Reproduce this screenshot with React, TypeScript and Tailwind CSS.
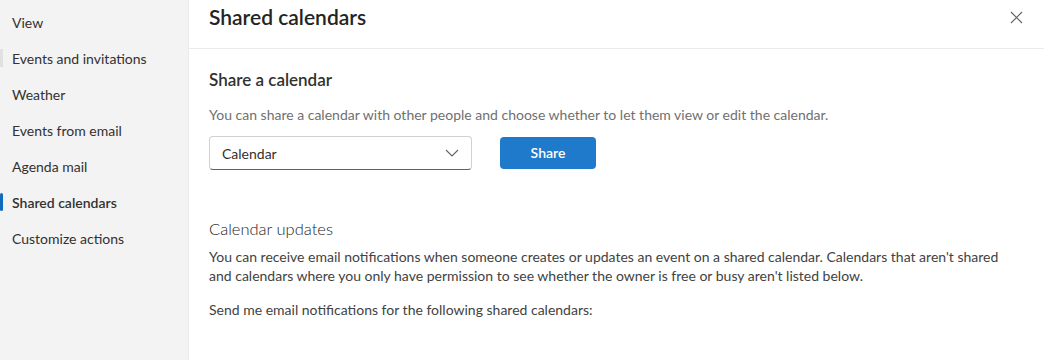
import React from "react";

const items = [
  "View",
  "Events and invitations",
  "Weather",
  "Events from email",
  "Agenda mail",
  "Shared calendars",
  "Customize actions",
];

export default function App() {
  return (
    <div
      className="flex h-[360px] w-[1044px] overflow-hidden bg-white text-[#323130]"
      style={{ fontFamily: "Lato, 'Open Sans', sans-serif" }}
    >
      <aside className="flex w-[189px] shrink-0 flex-col border-r border-[#ebebeb] bg-[#f3f3f3] pt-[4px]">
        {items.map((label) => {
          const active = label === "Shared calendars";
          const hover = label === "Events and invitations";
          return (
            <div key={label} className="relative flex h-[36px] items-center pl-[12px] text-[14px]">
              {active && <span className="absolute left-0 top-[9px] h-[18px] w-[3px] rounded-[2px] bg-[#0f6cbd]" />}
              {hover && <span className="absolute left-0 top-[9px] h-[18px] w-[3px] bg-[#e1e1e1]" />}
              <span className={active ? "font-semibold" : ""}>{label}</span>
            </div>
          );
        })}
      </aside>
      <main className="flex min-w-0 flex-1 flex-col">
        <header className="flex h-[49px] shrink-0 items-start justify-between border-b border-[#edebe9] pl-[20px] pr-[20px] pt-[3px]">
          <h1 className="text-[21px] font-semibold leading-[28px] text-[#242424]">Shared calendars</h1>
          <svg width="13" height="13" viewBox="0 0 13 13" className="mr-[1px] mt-[8px]">
            <path d="M1 1 L12 12 M12 1 L1 12" stroke="#616161" strokeWidth="1.1" />
          </svg>
        </header>
        <section className="flex flex-col pl-[20px] pr-[24px] pt-[20px]">
          <h2 className="text-[17px] font-semibold leading-[22px]">Share a calendar</h2>
          <p className="mt-[14px] text-[14px] leading-[20px] text-[#707070]">
            You can share a calendar with other people and choose whether to let them view or edit the calendar.
          </p>
          <div className="mt-[11px] flex items-center gap-[28px]">
            <div className="flex h-[34px] w-[263px] items-center justify-between rounded-[4px] border border-[#d1d1d1] border-b-[#616161] pl-[12px] pr-[12px] text-[14px]">
              <span>Calendar</span>
              <svg width="14" height="8" viewBox="0 0 14 8">
                <path d="M1 1 L7 7 L13 1" stroke="#616161" strokeWidth="1.1" fill="none" />
              </svg>
            </div>
            <button className="mb-[1px] h-[32px] w-[96px] rounded-[4px] bg-[#1f7acc] text-[14px] font-semibold text-white">
              Share
            </button>
          </div>
          <h2 className="mt-[47px] text-[16.5px] font-light leading-[24px] text-[#242424]">Calendar updates</h2>
          <p className="mt-[6px] text-[14px] leading-[19px] text-[#424242]">
            You can receive email notifications when someone creates or updates an event on a shared calendar. Calendars that aren't shared and calendars where you only have permission to see whether the owner is free or busy aren't listed below.
          </p>
          <p className="mt-[15px] text-[14px] leading-[19px] text-[#424242]">
            Send me email notifications for the following shared calendars:
          </p>
        </section>
      </main>
    </div>
  );
}
